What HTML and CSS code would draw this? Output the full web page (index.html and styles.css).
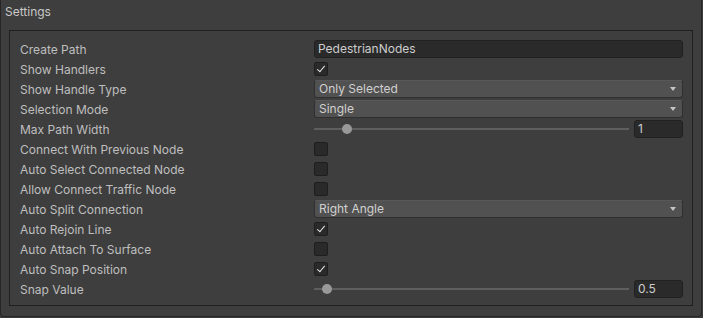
FILE: index.html
```html
<!DOCTYPE html>
<html lang="en">
<head>
  <meta charset="UTF-8" />
  <title>Settings</title>
  <link rel="stylesheet" href="styles.css">
</head>
<body>

<div class="panel">
  <div class="panel-title">Settings</div>

  <div class="group">
    <div class="row">
      <span class="label">Create Path</span>
      <div class="text-field">PedestrianNodes</div>
    </div>
    <div class="row">
      <span class="label">Show Handlers</span>
      <span class="toggle checked"></span>
    </div>
    <div class="row">
      <span class="label">Show Handle Type</span>
      <div class="dropdown">Only Selected</div>
    </div>
    <div class="row">
      <span class="label">Selection Mode</span>
      <div class="dropdown">Single</div>
    </div>
    <div class="row">
      <span class="label">Max Path Width</span>
      <div class="slider">
        <div class="track"><span class="knob" style="left: 33px"></span></div>
        <div class="text-field number">1</div>
      </div>
    </div>
    <div class="row">
      <span class="label">Connect With Previous Node</span>
      <span class="toggle"></span>
    </div>
    <div class="row">
      <span class="label">Auto Select Connected Node</span>
      <span class="toggle"></span>
    </div>
    <div class="row">
      <span class="label">Allow Connect Traffic Node</span>
      <span class="toggle"></span>
    </div>
    <div class="row">
      <span class="label">Auto Split Connection</span>
      <div class="dropdown">Right Angle</div>
    </div>
    <div class="row">
      <span class="label">Auto Rejoin Line</span>
      <span class="toggle checked"></span>
    </div>
    <div class="row">
      <span class="label">Auto Attach To Surface</span>
      <span class="toggle"></span>
    </div>
    <div class="row">
      <span class="label">Auto Snap Position</span>
      <span class="toggle checked"></span>
    </div>
    <div class="row">
      <span class="label">Snap Value</span>
      <div class="slider">
        <div class="track"><span class="knob" style="left: 13px"></span></div>
        <div class="text-field number">0.5</div>
      </div>
    </div>
  </div>
</div>

</body>
</html>
```

FILE: styles.css
```css
body {
  margin: 0;
  background: #3c3c3c;
  font-family: Inter, "Noto Sans", sans-serif;
  font-size: 12px;
  color: #c4c4c4;
}
.panel {
  box-sizing: border-box;
  width: 702px;
  height: 317px;
  background: #3e3e3e;
  border: 1px solid #262626;
  border-top: none;
  border-radius: 0 0 4px 4px;
}
.panel-title {
  height: 30px;
  line-height: 24px;
  padding-left: 4px;
  color: #c8c8c8;
}
.group {
  margin: 0 8px;
  border: 1px solid #1f1f1f;
  padding: 8px 9px 6px 10px;
}
.row {
  display: grid;
  grid-template-columns: 294px 1fr;
  align-items: center;
  height: 20px;
}
.label {
  white-space: nowrap;
  color: #bfbfbf;
}
.text-field {
  box-sizing: border-box;
  height: 18px;
  line-height: 16px;
  padding: 0 3px;
  background: #2a2a2a;
  border: 1px solid #212121;
  border-radius: 3px;
  color: #cdcdcd;
}
.dropdown {
  position: relative;
  box-sizing: border-box;
  height: 18px;
  line-height: 16px;
  padding: 0 4px;
  background: #515151;
  border: 1px solid #303030;
  border-top-color: #585858;
  border-radius: 3px;
  color: #d0d0d0;
}
.dropdown::after {
  content: "";
  position: absolute;
  right: 6px;
  top: 6px;
  border-left: 3.5px solid transparent;
  border-right: 3.5px solid transparent;
  border-top: 4px solid #c4c4c4;
}
.toggle {
  box-sizing: border-box;
  width: 14px;
  height: 14px;
  background: #2a2a2a;
  border: 1px solid #1e1e1e;
  border-radius: 2px;
  position: relative;
}
.toggle.checked::after {
  content: "";
  position: absolute;
  left: 4px;
  top: 1px;
  width: 3px;
  height: 7px;
  border-right: 1.6px solid #e6e6e6;
  border-bottom: 1.6px solid #e6e6e6;
  transform: rotate(40deg);
}
.slider {
  display: flex;
  align-items: center;
  gap: 5px;
}
.track {
  position: relative;
  flex: 1;
  height: 2px;
  background: #5e5e5e;
}
.knob {
  position: absolute;
  top: -4px;
  width: 10px;
  height: 10px;
  margin-left: -5px;
  border-radius: 50%;
  background: #999;
}
.number {
  width: 49px;
  flex: none;
}
```
